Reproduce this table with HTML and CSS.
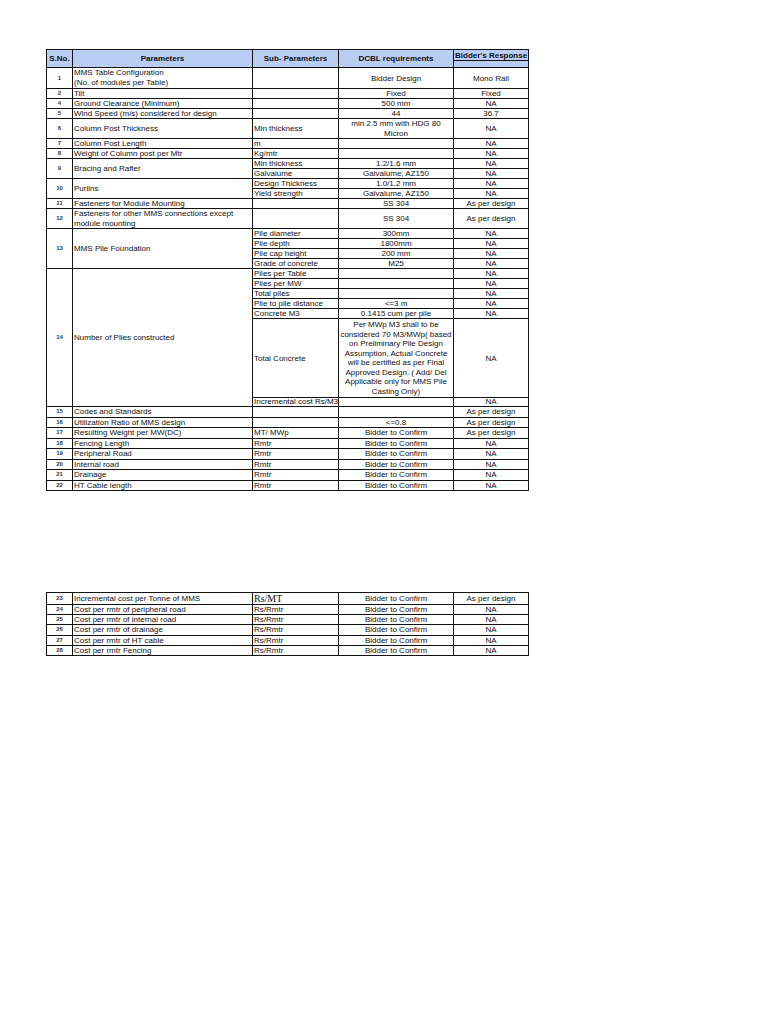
FILE: index.html
```html
<!DOCTYPE html>
<html>
<head>
<meta charset="utf-8">
<link rel="stylesheet" href="styles.css">
</head>
<body>
<div class="page">
<table class="sheet">
<colgroup><col class="c1"><col class="c2"><col class="c3"><col class="c4"><col class="c5"></colgroup>
<tr class="hd1">
  <th rowspan="2">S.No.</th>
  <th rowspan="2">Parameters</th>
  <th rowspan="2">Sub- Parameters</th>
  <th rowspan="2">DCBL requirements</th>
  <th class="bid">Bidder's Response</th>
</tr>
<tr class="hd2"><th></th></tr>

<tr class="h21"><td class="no">1</td><td class="p ml">MMS Table Configuration<br>(No. of modules per Table)</td><td class="s"></td><td class="c">Bidder Design</td><td class="c">Mono Rail</td></tr>
<tr class="h10"><td class="no">2</td><td class="p">Tilt</td><td class="s"></td><td class="c">Fixed</td><td class="c">Fixed</td></tr>
<tr class="h10"><td class="no">4</td><td class="p">Ground Clearance (Minimum)</td><td class="s"></td><td class="c">500 mm</td><td class="c">NA</td></tr>
<tr class="h10"><td class="no">5</td><td class="p">Wind Speed (m/s) considered for design</td><td class="s"></td><td class="c">44</td><td class="c">36.7</td></tr>
<tr class="h20"><td class="no">6</td><td class="p">Column Post Thickness</td><td class="s">Min thickness</td><td class="c ml2">min 2.5 mm with HDG 80<br>Micron</td><td class="c">NA</td></tr>
<tr class="h10"><td class="no">7</td><td class="p">Column Post Length</td><td class="s">m</td><td class="c"></td><td class="c">NA</td></tr>
<tr class="h10"><td class="no">8</td><td class="p">Weight of Column post per Mtr</td><td class="s">Kg/mtr</td><td class="c"></td><td class="c">NA</td></tr>
<tr class="h10"><td class="no" rowspan="2">9</td><td class="p" rowspan="2">Bracing and Rafter</td><td class="s">Min thickness</td><td class="c">1.2/1.6 mm</td><td class="c">NA</td></tr>
<tr class="h10"><td class="s">Galvalume</td><td class="c">Galvalume, AZ150</td><td class="c">NA</td></tr>
<tr class="h10"><td class="no" rowspan="2">10</td><td class="p" rowspan="2">Purlins</td><td class="s">Design Thickness</td><td class="c">1.0/1.2 mm</td><td class="c">NA</td></tr>
<tr class="h10"><td class="s">Yield strength</td><td class="c">Galvalume, AZ150</td><td class="c">NA</td></tr>
<tr class="h10"><td class="no">11</td><td class="p">Fasteners for Module Mounting</td><td class="s"></td><td class="c">SS 304</td><td class="c">As per design</td></tr>
<tr class="h20"><td class="no">12</td><td class="p ml2">Fasteners for other MMS connections except<br>module mounting</td><td class="s"></td><td class="c">SS 304</td><td class="c">As per design</td></tr>
<tr class="h10"><td class="no" rowspan="4">13</td><td class="p" rowspan="4">MMS Pile Foundation</td><td class="s">Pile diameter</td><td class="c">300mm</td><td class="c">NA</td></tr>
<tr class="h10"><td class="s">Pile depth</td><td class="c">1800mm</td><td class="c">NA</td></tr>
<tr class="h10"><td class="s">Pile cap height</td><td class="c">200 mm</td><td class="c">NA</td></tr>
<tr class="h10"><td class="s">Grade of concrete</td><td class="c">M25</td><td class="c">NA</td></tr>
<tr class="h10"><td class="no" rowspan="7">14</td><td class="p" rowspan="7">Number of Piles constructed</td><td class="s">Piles per Table</td><td class="c"></td><td class="c">NA</td></tr>
<tr class="h10"><td class="s">Piles per MW</td><td class="c"></td><td class="c">NA</td></tr>
<tr class="h10"><td class="s">Total piles</td><td class="c"></td><td class="c">NA</td></tr>
<tr class="h10"><td class="s">Pile to pile distance</td><td class="c">&lt;=3 m</td><td class="c">NA</td></tr>
<tr class="h10"><td class="s">Concrete M3</td><td class="c">0.1415 cum per pile</td><td class="c">NA</td></tr>
<tr class="h79"><td class="s">Total Concrete</td><td class="c ml8">Per MWp M3 shall to be<br>considered 70 M3/MWp( based<br>on Preliminary Pile Design<br>Assumption, Actual Concrete<br>will be certified as per Final<br>Approved Design. ( Add/ Del<br>Applicable only for MMS Pile<br>Casting Only)</td><td class="c">NA</td></tr>
<tr class="h9"><td class="s top tight">Incremental cost Rs/M3</td><td class="c tight"></td><td class="c bot tight">NA</td></tr>
<tr class="hb"><td class="no">15</td><td class="p">Codes and Standards</td><td class="s"></td><td class="c"></td><td class="c">As per design</td></tr>
<tr class="hb"><td class="no">16</td><td class="p">Utilization Ratio of MMS design</td><td class="s"></td><td class="c">&lt;=0.8</td><td class="c">As per design</td></tr>
<tr class="hb"><td class="no">17</td><td class="p">Resulting Weight per MW(DC)</td><td class="s">MT/ MWp</td><td class="c">Bidder to Confirm</td><td class="c">As per design</td></tr>
<tr class="hb"><td class="no">18</td><td class="p">Fencing Length</td><td class="s">Rmtr</td><td class="c">Bidder to Confirm</td><td class="c">NA</td></tr>
<tr class="hb"><td class="no">19</td><td class="p">Peripheral Road</td><td class="s">Rmtr</td><td class="c">Bidder to Confirm</td><td class="c">NA</td></tr>
<tr class="hb"><td class="no">20</td><td class="p">Internal road</td><td class="s">Rmtr</td><td class="c">Bidder to Confirm</td><td class="c">NA</td></tr>
<tr class="hb"><td class="no">21</td><td class="p">Drainage</td><td class="s">Rmtr</td><td class="c">Bidder to Confirm</td><td class="c">NA</td></tr>
<tr class="hb"><td class="no">22</td><td class="p">HT Cable length</td><td class="s">Rmtr</td><td class="c">Bidder to Confirm</td><td class="c">NA</td></tr>
</table>

<table class="sheet second">
<colgroup><col class="c1"><col class="c2"><col class="c3"><col class="c4"><col class="c5"></colgroup>
<tr class="h12"><td class="no">23</td><td class="p">Incremental cost per Tonne of MMS</td><td class="s serif">Rs/MT</td><td class="c">Bidder to Confirm</td><td class="c">As per design</td></tr>
<tr class="hs"><td class="no">24</td><td class="p">Cost per rmtr of peripheral road</td><td class="s">Rs/Rmtr</td><td class="c">Bidder to Confirm</td><td class="c">NA</td></tr>
<tr class="hs"><td class="no">25</td><td class="p">Cost per rmtr of internal road</td><td class="s">Rs/Rmtr</td><td class="c">Bidder to Confirm</td><td class="c">NA</td></tr>
<tr class="hs"><td class="no">26</td><td class="p">Cost per rmtr of drainage</td><td class="s">Rs/Rmtr</td><td class="c">Bidder to Confirm</td><td class="c">NA</td></tr>
<tr class="hs"><td class="no">27</td><td class="p">Cost per rmtr of HT cable</td><td class="s">Rs/Rmtr</td><td class="c">Bidder to Confirm</td><td class="c">NA</td></tr>
<tr class="hs"><td class="no">28</td><td class="p">Cost per rmtr Fencing</td><td class="s">Rs/Rmtr</td><td class="c">Bidder to Confirm</td><td class="c">NA</td></tr>
</table>
</div>
</body>
</html>
```

FILE: styles.css
```css
html, body {
  margin: 0;
  padding: 0;
  background: #ffffff;
}
.page {
  padding: 49px 0 0 46px;
  font-family: "Liberation Sans", Arial, sans-serif;
  color: #111;
}
.sheet {
  border-collapse: collapse;
  table-layout: fixed;
  width: 482px;
  font-size: 8px;
  line-height: 9px;
}
.second {
  margin-top: 101px;
}
.c1 { width: 26px; }
.c2 { width: 180px; }
.c3 { width: 86px; }
.c4 { width: 115px; }
.c5 { width: 75px; }
.sheet td, .sheet th {
  border: 1px solid #111;
  padding: 0 1px;
  vertical-align: middle;
  overflow: hidden;
  white-space: nowrap;
}
.sheet th {
  background: #b9cdf3;
  font-weight: bold;
  text-align: center;
}
.hd1 { height: 11px; }
.hd2 { height: 7px; }
.sheet th.bid {
  vertical-align: top;
  padding-top: 1px;
}
.h9 { height: 9px; }
.h10 { height: 10px; }
.hb { height: 10.5px; }
.hs { height: 10.2px; }
.h12 { height: 12px; }
.h20 { height: 20px; }
.h21 { height: 21px; }
.h79 { height: 79px; }
.no {
  text-align: center;
  font-size: 6px;
  font-weight: bold;
  color: #333;
}
.p, .s { text-align: left; }
.c { text-align: center; }
.ml { line-height: 10px; }
.ml2 { line-height: 9.5px; }
.ml8 { line-height: 9.5px; }
.tight { line-height: 8px; }
.top { vertical-align: top; }
.sheet td.bot { vertical-align: bottom; }
.serif {
  font-family: "Liberation Serif", "Times New Roman", serif;
  font-size: 10px;
}
```
